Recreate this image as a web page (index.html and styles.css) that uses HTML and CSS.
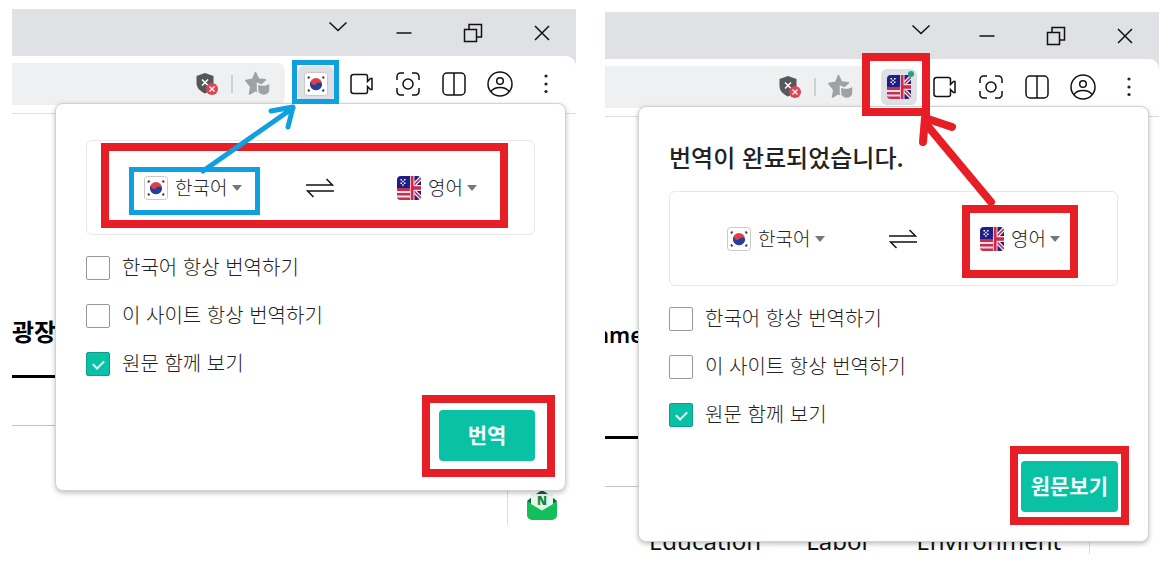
FILE: index.html
```html
<!DOCTYPE html>
<html lang="ko">
<head>
  <meta charset="UTF-8" />
  <meta name="viewport" content="width=device-width, initial-scale=1.0"/>
  <title>번역</title>
  <link rel="stylesheet" href="styles.css">
</head>
<body>
  <!-- shared icons -->
  <svg class="sprite" aria-hidden="true">
    <symbol id="chevron" viewBox="0 0 20 12"><path d="M1.5 1.5 10 9.5l8.500-8" /></symbol>
    <symbol id="minimize" viewBox="0 0 20 20"><path d="M2.500 10h15" /></symbol>
    <symbol id="restore" viewBox="0 0 20 20"><path d="M1.500 6.500h12v12h-12zM6 6.500v-5h12.500v12.500h-5" /></symbol>
    <symbol id="close" viewBox="0 0 20 20"><path d="M3 3l14 14M17 3 3 17" /></symbol>
    <symbol id="video" viewBox="0 0 26 26"><path d="M4.500 3.500h12a2 2 0 0 1 2 2v5l3-3h1.500v11h-1.500l-3-3v5a2 2 0 0 1-2 2H4.500a2.500 2.500 0 0 1-2.500-2.500V6a2.500 2.500 0 0 1 2.500-2.500z" /></symbol>
    <symbol id="capture" viewBox="0 0 26 26"><path d="M2 9V5.500A3.500 3.500 0 0 1 5.500 2H9M17 2h3.500A3.500 3.500 0 0 1 24 5.500V9M24 17v3.500a3.500 3.500 0 0 1-3.500 3.500H17M9 24H5.500A3.500 3.500 0 0 1 2 20.500V17" /><circle cx="13" cy="13" r="5" /></symbol>
    <symbol id="split" viewBox="0 0 26 26"><rect x="2" y="2" width="22" height="22" rx="4" /><path d="M13 2v22" /></symbol>
    <symbol id="profile" viewBox="0 0 26 26"><circle cx="13" cy="13" r="12" /><circle cx="13" cy="10" r="3.300" /><path d="M4 20.500c2-3 5.300-4 9-4s7 1 9 4" /></symbol>
    <symbol id="more" viewBox="0 0 26 26"><g fill="#222" stroke="none"><circle cx="13" cy="5" r="1.600" /><circle cx="13" cy="13" r="1.600" /><circle cx="13" cy="20.500" r="1.600" /></g></symbol>
    <symbol id="shield" viewBox="0 0 24 24">
      <path d="M10 1l8.500 3v7c0 5-4 8.500-8.500 10.500C5.500 19.500 1.500 16 1.500 11V4z" fill="#555759" stroke="none" />
      <path d="M7 7.500l6 6M13 7.500l-6 6" stroke="#fff" />
      <circle cx="17" cy="17" r="6" fill="#e04452" stroke="none" />
      <path d="M14.500 14.500l5 5M19.500 14.500l-5 5" stroke="#fff" stroke-width="1.200" />
    </symbol>
    <symbol id="star" viewBox="0 0 26 26">
      <path d="M10.500 1.500l3 6.500 7 .8-5.500 5-.5 8-4-2.300-6 3.500 1.300-7.200L.8 9.500l7-1.300z" fill="#a0a1a3" stroke="#a0a1a3" stroke-linejoin="round" />
      <path d="M12.500 12.500l3.500 1.500h4l5-2v7c0 3-2.500 5.500-6.200 5.500S12.500 22 12.500 19z" fill="#a0a1a3" stroke="#eff0f2" stroke-width="1.500" />
    </symbol>
    <symbol id="swap" viewBox="0 0 28 20"><path d="M0 7h26.500L20.500 1M28 13H1.500l6 6" /></symbol>
    <symbol id="flag-kr" viewBox="0 0 24 24">
      <rect x=".5" y=".5" width="23" height="23" rx="3" fill="#fff" stroke="#c9c9c9" stroke-width="1" />
      <circle cx="12" cy="12" r="6" fill="#dc3f45" stroke="none" />
      <path d="M6.600 9.500C8 13.500 10.500 13.500 12 12s4.500-2.500 6-.5a6 6 0 0 1-12 1.500 6 6 0 0 1 .6-3.500z" fill="#24409a" stroke="none" />
      <path d="M4 6.500l1.500-2M18.500 4.500l1.500 2M4 17.500l1.500 2M18.500 19.500l1.500-2" stroke="#444" stroke-width="2" />
    </symbol>
    <symbol id="flag-en" viewBox="0 0 24 24">
      <clipPath id="flag-clip"><rect width="24" height="24" rx="4" /></clipPath>
      <g clip-path="url(#flag-clip)" stroke="none">
        <rect width="24" height="24" fill="#1b1f86" />
        <path d="M0 12h13v12H0z" fill="#f4dfe6" />
        <path d="M0 12h13v3H0zM0 17h13v2.500H0zM0 21.500h13V24H0z" fill="#c72f50" />
        <path d="M3.500 3H5v1.500H3.500zM7 3h1.500v1.500H7zM5.200 4.800h1.500v1.500H5.200zM3.500 6.500H5V8H3.500zM7 6.500h1.500V8H7zM5.200 8.200h1.500v1.500H5.200z" fill="#fff" />
        <path d="M14 12 25 1M14 12l11 11" stroke="#fff" stroke-width="4" />
        <path d="M14 12 25 1M14 12l11 11" stroke="#d0284a" stroke-width="1.600" />
        <path d="M13 0h4.500v9H24v6h-6.500v9H13z" fill="#f6dbe2" />
        <path d="M13.800 0h2.700v10.300H24v3.400h-7.500V24h-2.700z" fill="#d0284a" />
      </g>
    </symbol>
  </svg>

  <main class="shots">
    <section class="shot">
      <header class="browser">
        <div class="titlebar">
          <button class="win-btn tabs-btn" aria-label="탭 검색"><svg width="20" height="12"><use href="#chevron" /></svg></button>
          <button class="win-btn" aria-label="최소화"><svg width="20" height="20"><use href="#minimize" /></svg></button>
          <button class="win-btn" aria-label="이전 크기로"><svg width="20" height="20"><use href="#restore" /></svg></button>
          <button class="win-btn" aria-label="닫기"><svg width="20" height="20"><use href="#close" /></svg></button>
        </div>
        <div class="toolbar">
          <div class="address">
            <svg width="24" height="24"><use href="#shield" /></svg>
            <span class="divider"></span>
            <svg width="26" height="26"><use href="#star" /></svg>
          </div>
          <button class="tool" aria-label="한국어 번역"><span class="tool-active"><svg width="24" height="24"><use href="#flag-kr" /></svg></span></button>
          <button class="tool" aria-label="녹화"><svg width="26" height="26"><use href="#video" /></svg></button>
          <button class="tool" aria-label="캡처"><svg width="26" height="26"><use href="#capture" /></svg></button>
          <button class="tool" aria-label="화면 분할"><svg width="26" height="26"><use href="#split" /></svg></button>
          <button class="tool" aria-label="프로필"><svg width="26" height="26"><use href="#profile" /></svg></button>
          <button class="tool" aria-label="더보기"><svg width="26" height="26"><use href="#more" /></svg></button>
        </div>
      </header>

      <div class="page">
        <h2 class="page-title">광장</h2>
        <div class="page-row"></div>
        <div class="page-foot">
          <a class="mail" href="#" aria-label="뉴스레터">
            <svg width="30" height="32" viewBox="0 0 30 32">
              <path d="M9 5l6-4 6 4z" fill="#17603a" />
              <path d="M0 12l5-4v8zM30 12l-5-4v8z" fill="#17603a" />
              <path d="M0 12l15 9 15-9v14a5 5 0 0 1-5 5H5a5 5 0 0 1-5-5z" fill="#12bf58" />
              <path d="M4 5h22v10l-11 6.500-11-6.500z" fill="#e4f7ea" />
              <text x="15" y="16" text-anchor="middle" class="mail-letter">N</text>
            </svg>
          </a>
        </div>
      </div>

      <div class="popup">
        <div class="langs">
          <label class="lang"><svg width="24" height="24"><use href="#flag-kr" /></svg><select aria-label="원본 언어"><option>한국어</option></select><span class="caret"></span></label>
          <button class="swap" aria-label="언어 바꾸기"><svg width="28" height="20"><use href="#swap" /></svg></button>
          <label class="lang"><svg width="24" height="24"><use href="#flag-en" /></svg><select aria-label="번역 언어"><option>영어</option></select><span class="caret"></span></label>
        </div>
        <div class="options">
          <label class="option"><input type="checkbox"><span>한국어 항상 번역하기</span></label>
          <label class="option"><input type="checkbox"><span>이 사이트 항상 번역하기</span></label>
          <label class="option"><input type="checkbox" checked><span>원문 함께 보기</span></label>
        </div>
        <button class="submit">번역</button>
      </div>

      <!-- highlight boxes and arrow -->
      <svg class="marks" width="564" height="557" viewBox="12 9 564 557">
        <g stroke="#e81e26" stroke-width="8">
          <rect x="105" y="147" width="399" height="77" />
          <rect x="426" y="399" width="125" height="74" />
        </g>
        <g stroke="#11a0df" stroke-width="5">
          <rect x="294.500" y="62.500" width="42" height="39" />
          <rect x="131.500" y="169.500" width="126" height="43" />
          <path d="M203 171 293 108M271 111l22-4-5 20" />
        </g>
      </svg>
    </section>

    <section class="shot shot-done">
      <header class="browser">
        <div class="titlebar">
          <button class="win-btn tabs-btn" aria-label="탭 검색"><svg width="20" height="12"><use href="#chevron" /></svg></button>
          <button class="win-btn" aria-label="최소화"><svg width="20" height="20"><use href="#minimize" /></svg></button>
          <button class="win-btn" aria-label="이전 크기로"><svg width="20" height="20"><use href="#restore" /></svg></button>
          <button class="win-btn" aria-label="닫기"><svg width="20" height="20"><use href="#close" /></svg></button>
        </div>
        <div class="toolbar">
          <div class="address">
            <svg width="24" height="24"><use href="#shield" /></svg>
            <span class="divider"></span>
            <svg width="26" height="26"><use href="#star" /></svg>
          </div>
          <button class="tool" aria-label="영어 번역"><span class="tool-active"><svg width="24" height="24"><use href="#flag-en" /></svg><i class="dot"></i></span></button>
          <button class="tool" aria-label="녹화"><svg width="26" height="26"><use href="#video" /></svg></button>
          <button class="tool" aria-label="캡처"><svg width="26" height="26"><use href="#capture" /></svg></button>
          <button class="tool" aria-label="화면 분할"><svg width="26" height="26"><use href="#split" /></svg></button>
          <button class="tool" aria-label="프로필"><svg width="26" height="26"><use href="#profile" /></svg></button>
          <button class="tool" aria-label="더보기"><svg width="26" height="26"><use href="#more" /></svg></button>
        </div>
      </header>

      <div class="page">
        <h2 class="page-title">nme</h2>
        <div class="page-row"></div>
        <nav class="page-nav">
          <a href="#">Education</a>
          <a href="#">Labor</a>
          <a href="#">Environment</a>
        </nav>
      </div>

      <div class="popup">
        <h1 class="popup-title">번역이 완료되었습니다.</h1>
        <div class="langs">
          <label class="lang"><svg width="24" height="24"><use href="#flag-kr" /></svg><select aria-label="원본 언어"><option>한국어</option></select><span class="caret"></span></label>
          <button class="swap" aria-label="언어 바꾸기"><svg width="28" height="20"><use href="#swap" /></svg></button>
          <label class="lang"><svg width="24" height="24"><use href="#flag-en" /></svg><select aria-label="번역 언어"><option>영어</option></select><span class="caret"></span></label>
        </div>
        <div class="options">
          <label class="option"><input type="checkbox"><span>한국어 항상 번역하기</span></label>
          <label class="option"><input type="checkbox"><span>이 사이트 항상 번역하기</span></label>
          <label class="option"><input type="checkbox" checked><span>원문 함께 보기</span></label>
        </div>
        <button class="submit">원문보기</button>
      </div>

      <svg class="marks" width="554" height="554" viewBox="605 12 554 554">
        <g stroke="#e81e26" stroke-width="8">
          <rect x="866" y="57" width="60" height="55" />
          <rect x="966" y="209" width="108" height="65" />
          <rect x="1014" y="450" width="111" height="71" />
          <path d="M991 202 926 124M952 127l-27-9-2 24" />
        </g>
      </svg>
    </section>
  </main>
</body>
</html>
```
FILE: styles.css
```css
* { box-sizing: border-box; }

body {
  margin: 0;
  font-family: "Noto Sans CJK KR", sans-serif;
  background: #fff;
  color: #222;
}

button {
  border: 0;
  padding: 0;
  background: none;
  font-family: inherit;
}

svg {
  display: block;
  flex: none;
  fill: none;
  stroke: #111;
  stroke-width: 1.5;
}

.sprite {
  position: absolute;
  width: 0;
  height: 0;
}

.shots {
  display: grid;
  grid-template-columns: 564fr 554fr;
  gap: 29px;
  align-items: start;
  padding: 9px 10px 0 12px;
}

.shot {
  position: relative;
}

.shot-done {
  margin-top: 3px;
}

/* browser window */
.browser {
  background: #e0e1e5;
  border-bottom: 1px solid #dcdddf;
}

.titlebar {
  display: flex;
  justify-content: flex-end;
  height: 47px;
}

.win-btn {
  display: flex;
  align-items: center;
  justify-content: center;
  width: 69px;
}

.tabs-btn {
  width: 62px;
  height: 36px;
}

.toolbar {
  display: flex;
  align-items: center;
  height: 57px;
  padding: 0 7px 2px 0;
  background: #fff;
  border-radius: 0 10px 0 0;
}

.address {
  flex: 1;
  display: flex;
  align-items: center;
  justify-content: flex-end;
  gap: 12px;
  height: 42px;
  margin-right: 8px;
  padding-right: 14px;
  background: #eff0f2;
  border-radius: 0 8px 8px 0;
}

.divider {
  width: 2px;
  height: 18px;
  background: #cfd0d2;
}

.tool {
  display: flex;
  justify-content: center;
  width: 46px;
}

.tool-active {
  position: relative;
  padding: 6px;
  border-radius: 6px;
  background: #dfe0e3;
}

.dot {
  position: absolute;
  top: 2px;
  right: 3px;
  width: 6px;
  height: 6px;
  border-radius: 50%;
  background: #1ba58f;
}

/* web page behind the popup */
.page-title {
  width: 300px;
  margin: 201px 0 0;
  padding-bottom: 28px;
  border-bottom: 3px solid #000;
  font-size: 24px;
  line-height: 32px;
  color: #000;
}

.shot-done .page-title {
  padding-bottom: 86px;
  font-family: "Noto Sans", sans-serif;
  font-size: 22px;
  font-weight: 600;
  text-indent: -10px;
  overflow: hidden;
}

.page-row {
  width: 300px;
  height: 48px;
  border-bottom: 1px solid #c4c4c4;
}

.page-foot {
  display: flex;
  justify-content: flex-end;
  height: 99px;
}

.mail {
  display: flex;
  align-items: flex-end;
  justify-content: center;
  width: 69px;
  padding-bottom: 4px;
  border-left: 1px solid #ddd;
}

.mail svg { stroke: none; }

.mail-letter {
  font: 900 12px "Noto Sans", sans-serif;
  fill: #12853f;
}

.page-nav {
  display: flex;
  align-items: flex-end;
  gap: 45px;
  height: 67px;
  margin-right: 69px;
  padding: 0 0 1px 44px;
  border-right: 1px solid #ddd;
}

.page-nav a {
  font-family: "Noto Sans", sans-serif;
  font-size: 24px;
  line-height: 24px;
  color: #111;
  text-decoration: none;
}

/* translate popup */
.popup {
  position: absolute;
  top: 94px;
  right: 10px;
  display: flex;
  flex-direction: column;
  width: 511px;
  padding: 36px 30px 29px;
  border: 1px solid #d2d2d2;
  border-radius: 8px;
  background: #fff;
  box-shadow: 0 2px 5px rgba(0, 0, 0, 0.25);
}

.popup-title {
  margin: 0 0 20px;
  font-size: 24px;
  font-weight: 500;
  line-height: 28px;
}

.langs {
  display: flex;
  align-items: center;
  justify-content: space-between;
  height: 95px;
  padding: 0 57px;
  border: 1px solid #e8e8e8;
  border-radius: 6px;
}

.lang {
  display: flex;
  align-items: center;
}

.lang select {
  appearance: none;
  margin: 0 4px 0 7px;
  padding: 0 0 2px;
  border: 0;
  background: none;
  font-family: inherit;
  font-size: 19px;
  font-weight: 300;
  line-height: 28px;
  color: #222;
}

.caret {
  border: 5px solid transparent;
  border-top: 6px solid #777;
  border-bottom: 0;
}

.options {
  display: grid;
  gap: 24px;
  margin-top: 21px;
}

.option {
  display: flex;
  align-items: center;
  gap: 12px;
  height: 24px;
  font-size: 20px;
  font-weight: 300;
}

.option span {
  padding-bottom: 4px;
}

.option input {
  appearance: none;
  display: grid;
  place-items: center;
  width: 24px;
  height: 24px;
  margin: 0;
  border: 1px solid #999;
  border-radius: 2px;
}

.option input:checked {
  border-color: #0b9f89;
  background: #09c2a5;
}

.option input:checked::after {
  content: "";
  width: 5px;
  height: 9px;
  margin-bottom: 2px;
  border: solid #e8fffb;
  border-width: 0 2px 2px 0;
  transform: rotate(45deg);
}

.submit {
  align-self: flex-end;
  min-width: 96px;
  height: 51px;
  margin-top: 34px;
  padding: 0 10px 4px;
  border-radius: 4px;
  background: #09c2a5;
  color: #f2fffd;
  font-size: 21px;
  font-weight: 700;
}

.marks {
  position: absolute;
  top: 0;
  right: 0;
  pointer-events: none;
}

.marks path {
  stroke-linecap: round;
  stroke-linejoin: round;
}
```
